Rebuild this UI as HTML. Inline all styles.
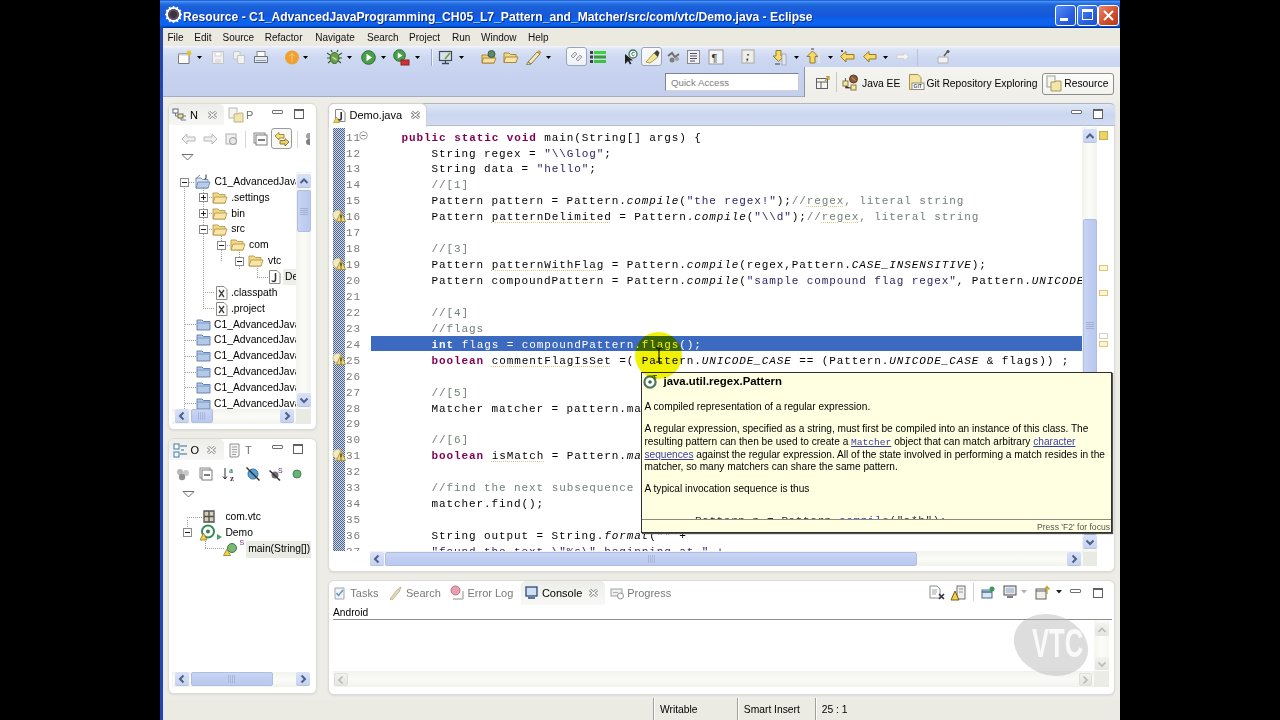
<!DOCTYPE html><html><head><meta charset="utf-8"><style>*{margin:0;padding:0;box-sizing:border-box}
html,body{width:1280px;height:720px;overflow:hidden;background:#000}
body{position:relative;font-family:"Liberation Sans",sans-serif;font-size:10px;color:#000}
.a{position:absolute}
.t{position:absolute;white-space:pre;line-height:1}
.code{position:absolute;font-family:"Liberation Mono",monospace;font-size:11px;letter-spacing:0.9px;white-space:pre;line-height:15.94px;color:#000}
.k{color:#7F0055;font-weight:bold}
.s{color:#2E2468}
.c{color:#748078}
.i{font-style:italic}
.st{font-style:italic}
.sq{text-decoration:underline dotted #D8C880;text-decoration-thickness:1px;text-underline-offset:2px}
</style></head><body><div class="a" style="left:160px;top:0px;width:960px;height:720px;background:#EBEAE3"></div>
<div class="a" style="left:163px;top:96px;width:957px;height:604px;background:#EDECE7"></div>
<div class="a" style="left:160px;top:0px;width:960px;height:28px;background:linear-gradient(#0C50C8 0px,#4A90F8 1.5px,#2A74E4 3px,#1A62D8 6px,#185AD8 13px,#1458DE 16px,#0A64F2 20px,#0E62EE 25px,#0050D0 26.5px,#00309A 27.5px)"></div>
<div class="a" style="left:163px;top:28px;width:957px;height:1px;background:#E6ECF4"></div>
<div class="a" style="left:160px;top:27px;width:3px;height:693px;background:#2446B4"></div>
<div class="a" style="left:163px;top:29px;width:1px;height:691px;background:#E4E8F0"></div>
<svg class="a" style="left:165px;top:6px;" width="17" height="17" viewBox="0 0 17 17"><circle cx="8.5" cy="8.5" r="7.6" fill="#fff"/><circle cx="8.5" cy="8.5" r="5.8" fill="#5A5060"/><circle cx="8.5" cy="8.5" r="3.5" fill="#3C3440"/><rect x="7.7" y="0" width="1.6" height="3" fill="#fff" transform="rotate(0 8.5 8.5)"/><rect x="7.7" y="0" width="1.6" height="3" fill="#fff" transform="rotate(30 8.5 8.5)"/><rect x="7.7" y="0" width="1.6" height="3" fill="#fff" transform="rotate(60 8.5 8.5)"/><rect x="7.7" y="0" width="1.6" height="3" fill="#fff" transform="rotate(90 8.5 8.5)"/><rect x="7.7" y="0" width="1.6" height="3" fill="#fff" transform="rotate(120 8.5 8.5)"/><rect x="7.7" y="0" width="1.6" height="3" fill="#fff" transform="rotate(150 8.5 8.5)"/><rect x="7.7" y="0" width="1.6" height="3" fill="#fff" transform="rotate(180 8.5 8.5)"/><rect x="7.7" y="0" width="1.6" height="3" fill="#fff" transform="rotate(210 8.5 8.5)"/><rect x="7.7" y="0" width="1.6" height="3" fill="#fff" transform="rotate(240 8.5 8.5)"/><rect x="7.7" y="0" width="1.6" height="3" fill="#fff" transform="rotate(270 8.5 8.5)"/><rect x="7.7" y="0" width="1.6" height="3" fill="#fff" transform="rotate(300 8.5 8.5)"/><rect x="7.7" y="0" width="1.6" height="3" fill="#fff" transform="rotate(330 8.5 8.5)"/></svg>
<div class="t" style="left:183px;top:10.56px;font-size:12.15px;color:#fff;font-weight:bold;text-shadow:1px 1px 0 #0A2A80">Resource - C1_AdvancedJavaProgramming_CH05_L7_Pattern_and_Matcher/src/com/vtc/Demo.java - Eclipse</div>
<div class="a" style="left:1055px;top:5px;width:21px;height:21px;border:1px solid #fff;border-radius:3px;background:linear-gradient(135deg,#5A8EF8,#2860E0 60%,#1E50D0)"><div class="a" style="left:4px;top:12px;width:8px;height:3px;background:#fff"></div></div>
<div class="a" style="left:1077px;top:5px;width:21px;height:21px;border:1px solid #fff;border-radius:3px;background:linear-gradient(135deg,#5A8EF8,#2860E0 60%,#1E50D0)"><div class="a" style="left:4px;top:3px;width:11px;height:11px;border:1px solid #fff;border-top-width:3px"></div></div>
<div class="a" style="left:1098px;top:5px;width:21px;height:21px;border:1px solid #fff;border-radius:3px;background:linear-gradient(135deg,#E88870,#D0502C 55%,#B83818)"><svg class="a" style="left:3px;top:3px" width="13" height="13"><path d="M2 2L11 11M11 2L2 11" stroke="#fff" stroke-width="2"/></svg></div>
<div class="a" style="left:163px;top:29px;width:957px;height:17px;background:#EBE9E0"></div>
<div class="t" style="left:167.5px;top:32.91px;font-size:10px;color:#111;">File</div>
<div class="t" style="left:194.3px;top:32.91px;font-size:10px;color:#111;">Edit</div>
<div class="t" style="left:222.5px;top:32.91px;font-size:10px;color:#111;">Source</div>
<div class="t" style="left:264.7px;top:32.91px;font-size:10px;color:#111;">Refactor</div>
<div class="t" style="left:315.3px;top:32.91px;font-size:10px;color:#111;">Navigate</div>
<div class="t" style="left:367px;top:32.91px;font-size:10px;color:#111;">Search</div>
<div class="t" style="left:409px;top:32.91px;font-size:10px;color:#111;">Project</div>
<div class="t" style="left:452px;top:32.91px;font-size:10px;color:#111;">Run</div>
<div class="t" style="left:481px;top:32.91px;font-size:10px;color:#111;">Window</div>
<div class="t" style="left:528px;top:32.91px;font-size:10px;color:#111;">Help</div>
<div class="a" style="left:163px;top:46px;width:957px;height:50px;background:linear-gradient(#F4F7FC 0px,#DCE4F6 3px,#CDD8F1 12px,#C6D2EF 30px,#C3CFEC 49px)"></div>
<div class="a" style="left:163px;top:96px;width:642px;height:1px;background:#A4ACC2"></div>
<div class="a" style="left:163px;top:97px;width:957px;height:5px;background:#EEEDE8"></div>
<div class="a" style="left:805px;top:67px;width:315px;height:35px;background:linear-gradient(#F4F4F0,#EFEEE9)"></div>
<div class="a" style="left:804px;top:67px;width:1px;height:30px;background:#8C96A8"></div>
<div class="a" style="left:168px;top:103px;width:149px;height:327px;background:#fff;border:1px solid #DCDCD6;border-radius:6px;box-shadow:0 1px 2px rgba(0,0,0,0.08)"></div>
<div class="a" style="left:169px;top:104px;width:55px;height:21px;background:linear-gradient(#EDEDEA,#F6F6F4);border-radius:5px 5px 0 0"></div>
<div class="a" style="left:168px;top:438px;width:149px;height:256px;background:#fff;border:1px solid #DCDCD6;border-radius:6px;box-shadow:0 1px 2px rgba(0,0,0,0.08)"></div>
<div class="a" style="left:169px;top:439px;width:55px;height:21px;background:linear-gradient(#EDEDEA,#F6F6F4);border-radius:5px 5px 0 0"></div>
<div class="a" style="left:328px;top:103px;width:787px;height:469px;background:#fff;border:1px solid #DCDCD6;border-radius:6px;box-shadow:0 1px 2px rgba(0,0,0,0.08)"></div>
<div class="a" style="left:329px;top:103px;width:786px;height:23px;background:linear-gradient(#E0E7F6,#CAD7F0 50%,#D2DCF2);border-radius:5px 5px 0 0;border-top:1px solid #B0B6C4;border-bottom:1px solid #B4BCCC"></div>
<div class="a" style="left:328px;top:103px;width:99px;height:24px;background:#fff;border:1px solid #D0D0CC;border-bottom:none;border-radius:6px 6px 0 0"></div>
<div class="a" style="left:328px;top:580px;width:787px;height:115px;background:#fff;border:1px solid #DCDCD6;border-radius:6px;box-shadow:0 1px 2px rgba(0,0,0,0.08)"></div>
<div class="a" style="left:521px;top:581px;width:84px;height:24px;background:linear-gradient(#EDEDEA,#F8F8F6);border-radius:5px 5px 0 0"></div>
<div class="a" style="left:333px;top:128px;width:12px;height:423px;background:repeating-conic-gradient(#4E6488 0 25%,#CCD8EA 0 50%) 0 0/2px 2px"></div>
<div class="a" style="left:346px;top:126px;width:736px;height:425px;overflow:hidden">
<div class="a" style="left:25px;top:210px;width:711px;height:15px;background:#3D6AC1"></div>
<div class="code" style="left:25.600000000000023px;top:4.599999999999994px">    <span class="k">public</span> <span class="k">static</span> <span class="k">void</span> main(String[] args) {
        String regex = <span class="s">&quot;\\Glog&quot;</span>;
        String data = <span class="s">&quot;hello&quot;</span>;
        <span class="c">//[1]</span>
        Pattern pattern = Pattern.<span class="i">compile</span>(<span class="s">&quot;the regex!&quot;</span>);<span class="c">//<span class="sq">regex</span>, literal string</span>
        Pattern <span class="sq">patternDelimited</span> = Pattern.<span class="i">compile</span>(<span class="s">&quot;\\d&quot;</span>);<span class="c">//<span class="sq">regex</span>, literal string</span>

        <span class="c">//[3]</span>
        Pattern <span class="sq">patternWithFlag</span> = Pattern.<span class="i">compile</span>(regex,Pattern.<span class="st">CASE_INSENSITIVE</span>);
        Pattern compoundPattern = Pattern.<span class="i">compile</span>(<span class="s">&quot;sample compound flag regex&quot;</span>, Pattern.<span class="st">UNICODE_CASE</span>);

        <span class="c">//[4]</span>
        <span class="c">//flags</span>
        <span style="color:#fff"><b>int</b> flags = compoundPattern.flags();</span>
        <span class="k">boolean</span> <span class="sq">commentFlagIsSet</span> =( Pattern.<span class="st">UNICODE_CASE</span> == (Pattern.<span class="st">UNICODE_CASE</span> &amp; flags)) ;

        <span class="c">//[5]</span>
        Matcher matcher = pattern.matcher(data);

        <span class="c">//[6]</span>
        <span class="k">boolean</span> <span class="sq">isMatch</span> = Pattern.<span class="i">matches</span>(regex, data);

        <span class="c">//find the next subsequence of the input sequence</span>
        matcher.find();

        String output = String.<span class="i">format</span>(<span class="s">&quot;&quot;</span> +
        <span class="s">&quot;found the text \&quot;%s\&quot; beginning at &quot;</span> +</div>
<div class="code" style="left:0px;top:4.599999999999994px;color:#787878">11
12
13
14
15
16
17
18
19
20
21
22
23
24
25
26
27
28
29
30
31
32
33
34
35
36
37</div>
</div>
<svg class="a" style="left:359px;top:131px;" width="9" height="9" viewBox="0 0 9 9"><circle cx="4.5" cy="4.5" r="3.8" fill="#fff" stroke="#A0A0A0" stroke-width="1"/><path d="M2.5 4.5H6.5" stroke="#808080" stroke-width="1"/></svg>
<svg class="a" style="left:332px;top:209.7px;" width="14" height="12" viewBox="0 0 14 12"><circle cx="5.5" cy="5" r="4.6" fill="#F2EAC0" stroke="#C8BC98" stroke-width="0.9"/><path d="M3 9.5H8V11.5H3Z" fill="#D0C8B0"/><path d="M9 1.5L13.5 11.5H4.5Z" fill="#F0D878" stroke="#A08838" stroke-width="0.8"/><path d="M9 4.5V8.5M9 9.5V10.5" stroke="#202010" stroke-width="1.2"/></svg>
<svg class="a" style="left:332px;top:257.52px;" width="14" height="12" viewBox="0 0 14 12"><circle cx="5.5" cy="5" r="4.6" fill="#F2EAC0" stroke="#C8BC98" stroke-width="0.9"/><path d="M3 9.5H8V11.5H3Z" fill="#D0C8B0"/><path d="M9 1.5L13.5 11.5H4.5Z" fill="#F0D878" stroke="#A08838" stroke-width="0.8"/><path d="M9 4.5V8.5M9 9.5V10.5" stroke="#202010" stroke-width="1.2"/></svg>
<svg class="a" style="left:332px;top:353.15999999999997px;" width="14" height="12" viewBox="0 0 14 12"><circle cx="5.5" cy="5" r="4.6" fill="#F2EAC0" stroke="#C8BC98" stroke-width="0.9"/><path d="M3 9.5H8V11.5H3Z" fill="#D0C8B0"/><path d="M9 1.5L13.5 11.5H4.5Z" fill="#F0D878" stroke="#A08838" stroke-width="0.8"/><path d="M9 4.5V8.5M9 9.5V10.5" stroke="#202010" stroke-width="1.2"/></svg>
<svg class="a" style="left:332px;top:448.8px;" width="14" height="12" viewBox="0 0 14 12"><circle cx="5.5" cy="5" r="4.6" fill="#F2EAC0" stroke="#C8BC98" stroke-width="0.9"/><path d="M3 9.5H8V11.5H3Z" fill="#D0C8B0"/><path d="M9 1.5L13.5 11.5H4.5Z" fill="#F0D878" stroke="#A08838" stroke-width="0.8"/><path d="M9 4.5V8.5M9 9.5V10.5" stroke="#202010" stroke-width="1.2"/></svg>
<svg class="a" style="left:333px;top:108px;" width="14" height="15" viewBox="0 0 14 15"><path d="M2.5 1.5H9L12 4.5V13.5H2.5Z" fill="#fff" stroke="#8A8A80" stroke-width="1"/><path d="M8.2 4V10.3Q8.2 12 6.5 12Q5.2 12 4.8 11" fill="none" stroke="#303030" stroke-width="1.6"/><path d="M3.5 9L0.5 14.5H6.5Z" fill="#F0D060" stroke="#B09030" stroke-width="0.7"/></svg>
<div class="t" style="left:349.5px;top:109.63px;font-size:11px;color:#000;">Demo.java</div>
<svg class="a" style="left:410px;top:110px;" width="11" height="10" viewBox="0 0 11 10"><path d="M1.8 1.8L9.2 8.2M9.2 1.8L1.8 8.2" stroke="#6E6E6E" stroke-width="3"/><path d="M1.8 1.8L9.2 8.2M9.2 1.8L1.8 8.2" stroke="#fff" stroke-width="1.2"/></svg>
<div class="a" style="left:1071px;top:110px;width:11px;height:4px;border:1px solid #707070;background:#fff;border-radius:1px"></div>
<div class="a" style="left:1093px;top:109px;width:10px;height:10px;border:1px solid #606060;border-top-width:2px;background:#fff"></div>
<div class="a" style="left:1082px;top:127px;width:15px;height:424px;background:linear-gradient(90deg,#F3F3EE,#FBFBF8 50%,#F3F3EE)"></div>
<div class="a" style="left:1083px;top:129px;width:14px;height:14px;background:linear-gradient(#D9E2F8,#C6D3F2);border-radius:2px;border-bottom:1px solid #B8C4DC"></div>
<svg class="a" style="left:1085px;top:131px;" width="10" height="10" viewBox="0 0 10 10"><path d="M1.5 7L5 3.5L8.5 7" fill="none" stroke="#4D6185" stroke-width="2"/></svg>
<div class="a" style="left:1083px;top:219px;width:14px;height:316px;background:linear-gradient(90deg,#C9D5F4,#BFCDF1 50%,#B9C8EE);border-radius:2px;border:1px solid #B0BEE0"></div>
<div class="a" style="left:1083px;top:535px;width:14px;height:14px;background:linear-gradient(#D9E2F8,#C6D3F2);border-radius:2px;border-bottom:1px solid #B8C4DC"></div>
<svg class="a" style="left:1085px;top:537px;" width="10" height="10" viewBox="0 0 10 10"><path d="M1.5 3.5L5 7L8.5 3.5" fill="none" stroke="#4D6185" stroke-width="2"/></svg>
<div class="a" style="left:1099px;top:131px;width:9px;height:9px;background:#E8D468;border:1px solid #C8B040"></div>
<div class="a" style="left:1099px;top:265px;width:9px;height:6px;background:#FAF4D8;border:1px solid #E0C870"></div>
<div class="a" style="left:1099px;top:290px;width:9px;height:6px;background:#FAF4D8;border:1px solid #E0C870"></div>
<div class="a" style="left:1099px;top:333px;width:9px;height:6px;background:#fff;border:1px solid #D0D0C8"></div>
<div class="a" style="left:1099px;top:341px;width:9px;height:6px;background:#FAF4D8;border:1px solid #E0C870"></div>
<div class="a" style="left:370px;top:551px;width:727px;height:15px;background:linear-gradient(#F3F3EE,#FBFBF8 50%,#F3F3EE)"></div>
<div class="a" style="left:370px;top:552px;width:14px;height:14px;background:linear-gradient(#D9E2F8,#C6D3F2);border-radius:2px;border-bottom:1px solid #B8C4DC"></div>
<svg class="a" style="left:372px;top:554px;" width="10" height="10" viewBox="0 0 10 10"><path d="M6.5 1.5L3 5L6.5 8.5" fill="none" stroke="#4D6185" stroke-width="2"/></svg>
<div class="a" style="left:385px;top:552px;width:532px;height:14px;background:linear-gradient(#CBD6F5,#BFCDF1 50%,#BAC9EE);border-radius:2px;border:1px solid #B0BEE0"></div>
<div class="a" style="left:1067px;top:552px;width:14px;height:14px;background:linear-gradient(#D9E2F8,#C6D3F2);border-radius:2px;border-bottom:1px solid #B8C4DC"></div>
<svg class="a" style="left:1069px;top:554px;" width="10" height="10" viewBox="0 0 10 10"><path d="M3.5 1.5L7 5L3.5 8.5" fill="none" stroke="#4D6185" stroke-width="2"/></svg>
<div class="a" style="left:1083px;top:552px;width:14px;height:14px;background:#EAEAE4"></div>
<svg class="a" style="left:1086px;top:322px;" width="8" height="7" viewBox="0 0 8 7"><path d="M0 0.5H8M0 2.5H8M0 4.5H8M0 6.5H8" stroke="#9CA8CC" stroke-width="0.8"/></svg>
<svg class="a" style="left:648px;top:555px;" width="8" height="8" viewBox="0 0 8 8"><path d="M0.5 0V8M2.5 0V8M4.5 0V8M6.5 0V8" stroke="#A4B0D0" stroke-width="0.8"/></svg>
<div class="a" style="left:641px;top:372px;width:471px;height:161px;background:#FFFFE1;border:1px solid #303030;box-shadow:1px 1px 1px #505050"></div>
<svg class="a" style="left:643px;top:374px;" width="16" height="15" viewBox="0 0 16 15"><circle cx="7" cy="8" r="5.6" fill="#fff" stroke="#4A7A5A" stroke-width="2.2"/><circle cx="7" cy="8" r="1.8" fill="#3A6A4A"/><path d="M9.5 1.5H14M11.5 1.5V6.5M11.5 4H13.5" stroke="#4A6A5A" stroke-width="1.2" fill="none"/></svg>
<div class="t" style="left:663.5px;top:376.43px;font-size:11.4px;color:#000;font-weight:bold">java.util.regex.Pattern</div>
<div class="t" style="left:644.5px;top:401.84px;font-size:10.15px;color:#000;">A compiled representation of a regular expression.</div>
<div class="t" style="left:644.5px;top:424.04px;font-size:10.15px;color:#000;">A regular expression, specified as a string, must first be compiled into an instance of this class. The</div>
<div class="t" style="left:644.5px;top:436.64px;font-size:10.15px">resulting pattern can then be used to create a <span style="font-family:'Liberation Mono',monospace;font-size:9.6px;color:#3A3AB0;text-decoration:underline">Matcher</span> object that can match arbitrary <span style="color:#3A3AB0;text-decoration:underline">character</span></div>
<div class="t" style="left:644.5px;top:449.64px;font-size:10.15px"><span style="color:#3A3AB0;text-decoration:underline">sequences</span> against the regular expression. All of the state involved in performing a match resides in the</div>
<div class="t" style="left:644.5px;top:462.34px;font-size:10.15px;color:#000;">matcher, so many matchers can share the same pattern.</div>
<div class="t" style="left:644.5px;top:484.14px;font-size:10.15px;color:#000;">A typical invocation sequence is thus</div>
<div class="a" style="left:642px;top:512px;width:469px;height:7px;overflow:hidden"><div class="code" style="left:53px;top:1.5px;font-size:11px;letter-spacing:0.6px;color:#303030">Pattern p = Pattern.<span style="color:#3A3AB0;text-decoration:underline">compile</span>("a*b");</div></div>
<div class="a" style="left:642px;top:518.5px;width:469px;height:1px;background:#8A8A80"></div>
<div class="t" style="left:1037px;top:523.30px;font-size:8.6px;color:#555;">Press &#x27;F2&#x27; for focus</div>
<div class="a" style="left:635px;top:332px;width:47px;height:47px;border-radius:50%;background:radial-gradient(circle,#F0F000 0,#F2F010 93%,rgba(242,240,40,0) 100%);mix-blend-mode:multiply"></div>
<svg class="a" style="left:655px;top:347px;" width="8" height="16" viewBox="0 0 8 16"><path d="M1 1H7M4 1V15M1 15H7" stroke="#000" stroke-width="1"/></svg>
<svg class="a" style="left:172px;top:108px;" width="15" height="14" viewBox="0 0 15 14"><rect x="1" y="1" width="5" height="4" fill="#fff" stroke="#5A6A7A"/><rect x="6" y="6" width="5" height="4" fill="#F0E0A0" stroke="#6A6A50"/><path d="M3.5 5V8H6M11 8H14M9 10V12H14" stroke="#6A7A8A" fill="none"/></svg>
<div class="t" style="left:190px;top:110.13px;font-size:11px;color:#000;">N</div>
<svg class="a" style="left:207px;top:110px;" width="11" height="10" viewBox="0 0 11 10"><path d="M1.8 1.8L9.2 8.2M9.2 1.8L1.8 8.2" stroke="#8A8A8A" stroke-width="3"/><path d="M1.8 1.8L9.2 8.2M9.2 1.8L1.8 8.2" stroke="#fff" stroke-width="1.2"/></svg>
<svg class="a" style="left:228px;top:107px;" width="17" height="16" viewBox="0 0 17 16"><rect x="1" y="1" width="8" height="10" fill="#F4F4F0" stroke="#B8B8B0"/><path d="M6 7H10L11 6H15V15H6Z" fill="#F2E6B0" stroke="#C0B080"/></svg>
<div class="t" style="left:246px;top:110.13px;font-size:11px;color:#707070;">P</div>
<div class="a" style="left:272px;top:110px;width:11px;height:4px;border:1px solid #707070;background:#fff;border-radius:1px"></div>
<div class="a" style="left:294px;top:109px;width:10px;height:10px;border:1px solid #606060;border-top-width:2px;background:#fff"></div>
<svg class="a" style="left:181px;top:132px;" width="15" height="14" viewBox="0 0 15 14"><path d="M1 7L6 2V5H14V9H6V12Z" fill="#F0F0F0" stroke="#B8B8B8"/></svg>
<svg class="a" style="left:203px;top:132px;" width="15" height="14" viewBox="0 0 15 14"><path d="M14 7L9 2V5H1V9H9V12Z" fill="#F0F0F0" stroke="#B8B8B8"/></svg>
<svg class="a" style="left:225px;top:132px;" width="14" height="14" viewBox="0 0 14 14"><rect x="1" y="2" width="10" height="10" fill="#F0F0F0" stroke="#B0B0B0"/><circle cx="8" cy="9" r="3.5" fill="#E8E8E8" stroke="#999"/></svg>
<div class="a" style="left:245px;top:131px;width:1px;height:17px;background:#D8D8D0"></div>
<svg class="a" style="left:253px;top:132px;" width="15" height="14" viewBox="0 0 15 14"><rect x="1" y="1" width="11" height="10" fill="#F4F4F4" stroke="#8A8A8A"/><rect x="3" y="3" width="11" height="10" fill="#fff" stroke="#7A7A7A"/><path d="M5 8H12" stroke="#505050" stroke-width="1.5"/></svg>
<div class="a" style="left:271px;top:128px;width:21px;height:21px;border:1px solid #9A9A9A;border-radius:3px;background:#F8F8F6"></div>
<svg class="a" style="left:274px;top:131px;" width="16" height="16" viewBox="0 0 16 16"><path d="M1 5L5 1.5V3.5H10V7H5V9Z" fill="#F6E27A" stroke="#9A8030" stroke-width="0.9"/><path d="M15 11L11 7.5V9.5H6V13H11V15Z" fill="#E6D070" stroke="#8A7028" stroke-width="0.9"/></svg>
<div class="a" style="left:297px;top:131px;width:1px;height:17px;background:#D8D8D0"></div>
<svg class="a" style="left:302px;top:132px;" width="8" height="14" viewBox="0 0 8 14"><circle cx="7" cy="4" r="3" fill="#A0A0A0"/><circle cx="7" cy="10" r="3" fill="#808080"/></svg>
<svg class="a" style="left:181px;top:153px;" width="13" height="8" viewBox="0 0 13 8"><path d="M1 1.5H12L6.5 7Z" fill="#fff" stroke="#707070"/></svg>
<div class="a" style="left:169px;top:172px;width:127px;height:237px;overflow:hidden">
<div class="a" style="left:-169px;top:-172px;width:400px;height:600px">
<div class="a" style="left:184px;top:186px;width:1px;height:234px;background-image:repeating-linear-gradient(#A0A0A0 0 1px,transparent 1px 2px)"></div>
<div class="a" style="left:203px;top:186px;width:1px;height:123px;background-image:repeating-linear-gradient(#A0A0A0 0 1px,transparent 1px 2px)"></div>
<div class="a" style="left:221px;top:234px;width:1px;height:27px;background-image:repeating-linear-gradient(#A0A0A0 0 1px,transparent 1px 2px)"></div>
<div class="a" style="left:239px;top:250px;width:1px;height:20px;background-image:repeating-linear-gradient(#A0A0A0 0 1px,transparent 1px 2px)"></div>
<div class="a" style="left:189px;top:182px;width:6px;height:1px;background-image:repeating-linear-gradient(90deg,#A0A0A0 0 1px,transparent 1px 2px)"></div>
<svg class="a" style="left:179.5px;top:177.5px;" width="9" height="9" viewBox="0 0 9 9"><rect x="0.5" y="0.5" width="8" height="8" fill="#fff" stroke="#8C8C8C"/><path d="M2 4.5H7" stroke="#202020"/></svg>
<svg class="a" style="left:195px;top:174.0px;" width="16" height="15" viewBox="0 0 16 15"><path d="M1 4H6L7.5 5.5H13V14H1Z" fill="#D8E4F4" stroke="#6A8AB0" stroke-width="0.9"/><path d="M3 8H15L13 14H1Z" fill="#B8CCE8" stroke="#6A8AB0" stroke-width="0.9"/><path d="M11 0.5V4Q11 5.5 9.5 5" stroke="#333" fill="none" stroke-width="1"/><path d="M0.5 5L5 1" stroke="#888"/></svg>
<div class="t" style="left:214.4px;top:176.97px;font-size:10.3px;color:#000;">C1_AdvancedJava</div>
<div class="a" style="left:207px;top:197px;width:5px;height:1px;background-image:repeating-linear-gradient(90deg,#A0A0A0 0 1px,transparent 1px 2px)"></div>
<svg class="a" style="left:198.5px;top:193.34px;" width="9" height="9" viewBox="0 0 9 9"><rect x="0.5" y="0.5" width="8" height="8" fill="#fff" stroke="#8C8C8C"/><path d="M2 4.5H7" stroke="#202020"/><path d="M4.5 2V7" stroke="#202020"/></svg>
<svg class="a" style="left:212px;top:190.84px;" width="16" height="13" viewBox="0 0 16 13"><path d="M1 2H6L7.5 3.5H13V12H1Z" fill="#F2D888" stroke="#B89848" stroke-width="0.9"/><path d="M3 6H15L13 12H1Z" fill="#F8E6A8" stroke="#B89848" stroke-width="0.9"/></svg>
<div class="t" style="left:231.2px;top:192.81px;font-size:10.3px;color:#000;">.settings</div>
<div class="a" style="left:207px;top:213px;width:5px;height:1px;background-image:repeating-linear-gradient(90deg,#A0A0A0 0 1px,transparent 1px 2px)"></div>
<svg class="a" style="left:198.5px;top:209.18px;" width="9" height="9" viewBox="0 0 9 9"><rect x="0.5" y="0.5" width="8" height="8" fill="#fff" stroke="#8C8C8C"/><path d="M2 4.5H7" stroke="#202020"/><path d="M4.5 2V7" stroke="#202020"/></svg>
<svg class="a" style="left:212px;top:206.68px;" width="16" height="13" viewBox="0 0 16 13"><path d="M1 2H6L7.5 3.5H13V12H1Z" fill="#F2D888" stroke="#B89848" stroke-width="0.9"/><path d="M3 6H15L13 12H1Z" fill="#F8E6A8" stroke="#B89848" stroke-width="0.9"/></svg>
<div class="t" style="left:231.2px;top:208.65px;font-size:10.3px;color:#000;">bin</div>
<div class="a" style="left:207px;top:229px;width:5px;height:1px;background-image:repeating-linear-gradient(90deg,#A0A0A0 0 1px,transparent 1px 2px)"></div>
<svg class="a" style="left:198.5px;top:225.01999999999998px;" width="9" height="9" viewBox="0 0 9 9"><rect x="0.5" y="0.5" width="8" height="8" fill="#fff" stroke="#8C8C8C"/><path d="M2 4.5H7" stroke="#202020"/></svg>
<svg class="a" style="left:212px;top:222.51999999999998px;" width="16" height="13" viewBox="0 0 16 13"><path d="M1 2H6L7.5 3.5H13V12H1Z" fill="#F2D888" stroke="#B89848" stroke-width="0.9"/><path d="M3 6H15L13 12H1Z" fill="#F8E6A8" stroke="#B89848" stroke-width="0.9"/></svg>
<div class="t" style="left:231.2px;top:224.49px;font-size:10.3px;color:#000;">src</div>
<div class="a" style="left:225px;top:245px;width:5px;height:1px;background-image:repeating-linear-gradient(90deg,#A0A0A0 0 1px,transparent 1px 2px)"></div>
<svg class="a" style="left:216.5px;top:240.86px;" width="9" height="9" viewBox="0 0 9 9"><rect x="0.5" y="0.5" width="8" height="8" fill="#fff" stroke="#8C8C8C"/><path d="M2 4.5H7" stroke="#202020"/></svg>
<svg class="a" style="left:230px;top:238.36px;" width="16" height="13" viewBox="0 0 16 13"><path d="M1 2H6L7.5 3.5H13V12H1Z" fill="#F2D888" stroke="#B89848" stroke-width="0.9"/><path d="M3 6H15L13 12H1Z" fill="#F8E6A8" stroke="#B89848" stroke-width="0.9"/></svg>
<div class="t" style="left:249px;top:240.33px;font-size:10.3px;color:#000;">com</div>
<svg class="a" style="left:234.5px;top:256.7px;" width="9" height="9" viewBox="0 0 9 9"><rect x="0.5" y="0.5" width="8" height="8" fill="#fff" stroke="#8C8C8C"/><path d="M2 4.5H7" stroke="#202020"/></svg>
<svg class="a" style="left:248px;top:254.2px;" width="16" height="13" viewBox="0 0 16 13"><path d="M1 2H6L7.5 3.5H13V12H1Z" fill="#F2D888" stroke="#B89848" stroke-width="0.9"/><path d="M3 6H15L13 12H1Z" fill="#F8E6A8" stroke="#B89848" stroke-width="0.9"/></svg>
<div class="t" style="left:268px;top:256.17px;font-size:10.3px;color:#000;">vtc</div>
<div class="a" style="left:257px;top:277px;width:11px;height:1px;background-image:repeating-linear-gradient(90deg,#A0A0A0 0 1px,transparent 1px 2px)"></div>
<div class="a" style="left:257px;top:266px;width:1px;height:11px;background-image:repeating-linear-gradient(#A0A0A0 0 1px,transparent 1px 2px)"></div>
<svg class="a" style="left:268px;top:270.03999999999996px;" width="13" height="14" viewBox="0 0 13 14"><path d="M1.5 0.5H9L12 3.5V13.5H1.5Z" fill="#fff" stroke="#8A8A80"/><path d="M7.5 3V9.5Q7.5 11.5 5.5 11.5Q4.3 11.5 3.8 10.5" fill="none" stroke="#303030" stroke-width="1.5"/></svg>
<div class="a" style="left:283px;top:269.03999999999996px;width:30px;height:16px;background:#EEEEE8"></div>
<div class="t" style="left:285px;top:272.01px;font-size:10.3px;color:#000;">Demo.java</div>
<div class="a" style="left:203px;top:292px;width:12px;height:1px;background-image:repeating-linear-gradient(90deg,#A0A0A0 0 1px,transparent 1px 2px)"></div>
<svg class="a" style="left:215px;top:285.88px;" width="13" height="14" viewBox="0 0 13 14"><path d="M1.5 0.5H9L12 3.5V13.5H1.5Z" fill="#fff" stroke="#8A8A80"/><path d="M4 4L9 11M9 4L4 11" stroke="#404040" stroke-width="1.3"/></svg>
<div class="t" style="left:231px;top:287.85px;font-size:10.3px;color:#000;">.classpath</div>
<div class="a" style="left:203px;top:308px;width:12px;height:1px;background-image:repeating-linear-gradient(90deg,#A0A0A0 0 1px,transparent 1px 2px)"></div>
<svg class="a" style="left:215px;top:301.72px;" width="13" height="14" viewBox="0 0 13 14"><path d="M1.5 0.5H9L12 3.5V13.5H1.5Z" fill="#fff" stroke="#8A8A80"/><path d="M4 4L9 11M9 4L4 11" stroke="#404040" stroke-width="1.3"/></svg>
<div class="t" style="left:231px;top:303.69px;font-size:10.3px;color:#000;">.project</div>
<div class="a" style="left:185px;top:324px;width:11px;height:1px;background-image:repeating-linear-gradient(90deg,#A0A0A0 0 1px,transparent 1px 2px)"></div>
<svg class="a" style="left:196px;top:317.56px;" width="15" height="13" viewBox="0 0 15 13"><path d="M1 2H6L7.5 3.5H14V12H1Z" fill="#B4C8E8" stroke="#5A7AA8" stroke-width="0.9"/><path d="M1 5H14" stroke="#7A9AC8"/></svg>
<div class="t" style="left:214px;top:319.53px;font-size:10.3px;color:#000;">C1_AdvancedJava</div>
<div class="a" style="left:185px;top:340px;width:11px;height:1px;background-image:repeating-linear-gradient(90deg,#A0A0A0 0 1px,transparent 1px 2px)"></div>
<svg class="a" style="left:196px;top:333.4px;" width="15" height="13" viewBox="0 0 15 13"><path d="M1 2H6L7.5 3.5H14V12H1Z" fill="#B4C8E8" stroke="#5A7AA8" stroke-width="0.9"/><path d="M1 5H14" stroke="#7A9AC8"/></svg>
<div class="t" style="left:214px;top:335.37px;font-size:10.3px;color:#000;">C1_AdvancedJava</div>
<div class="a" style="left:185px;top:356px;width:11px;height:1px;background-image:repeating-linear-gradient(90deg,#A0A0A0 0 1px,transparent 1px 2px)"></div>
<svg class="a" style="left:196px;top:349.24px;" width="15" height="13" viewBox="0 0 15 13"><path d="M1 2H6L7.5 3.5H14V12H1Z" fill="#B4C8E8" stroke="#5A7AA8" stroke-width="0.9"/><path d="M1 5H14" stroke="#7A9AC8"/></svg>
<div class="t" style="left:214px;top:351.21px;font-size:10.3px;color:#000;">C1_AdvancedJava</div>
<div class="a" style="left:185px;top:372px;width:11px;height:1px;background-image:repeating-linear-gradient(90deg,#A0A0A0 0 1px,transparent 1px 2px)"></div>
<svg class="a" style="left:196px;top:365.08px;" width="15" height="13" viewBox="0 0 15 13"><path d="M1 2H6L7.5 3.5H14V12H1Z" fill="#B4C8E8" stroke="#5A7AA8" stroke-width="0.9"/><path d="M1 5H14" stroke="#7A9AC8"/></svg>
<div class="t" style="left:214px;top:367.05px;font-size:10.3px;color:#000;">C1_AdvancedJava</div>
<div class="a" style="left:185px;top:387px;width:11px;height:1px;background-image:repeating-linear-gradient(90deg,#A0A0A0 0 1px,transparent 1px 2px)"></div>
<svg class="a" style="left:196px;top:380.91999999999996px;" width="15" height="13" viewBox="0 0 15 13"><path d="M1 2H6L7.5 3.5H14V12H1Z" fill="#B4C8E8" stroke="#5A7AA8" stroke-width="0.9"/><path d="M1 5H14" stroke="#7A9AC8"/></svg>
<div class="t" style="left:214px;top:382.89px;font-size:10.3px;color:#000;">C1_AdvancedJava</div>
<div class="a" style="left:185px;top:403px;width:11px;height:1px;background-image:repeating-linear-gradient(90deg,#A0A0A0 0 1px,transparent 1px 2px)"></div>
<svg class="a" style="left:196px;top:396.76px;" width="15" height="13" viewBox="0 0 15 13"><path d="M1 2H6L7.5 3.5H14V12H1Z" fill="#B4C8E8" stroke="#5A7AA8" stroke-width="0.9"/><path d="M1 5H14" stroke="#7A9AC8"/></svg>
<div class="t" style="left:214px;top:398.73px;font-size:10.3px;color:#000;">C1_AdvancedJava</div>
</div></div>
<div class="a" style="left:296px;top:172px;width:15px;height:237px;background:linear-gradient(90deg,#F3F3EE,#FBFBF8 50%,#F3F3EE)"></div>
<div class="a" style="left:297px;top:174px;width:14px;height:14px;background:linear-gradient(#D9E2F8,#C6D3F2);border-radius:2px;border-bottom:1px solid #B8C4DC"></div>
<svg class="a" style="left:299px;top:176px;" width="10" height="10" viewBox="0 0 10 10"><path d="M1.5 7L5 3.5L8.5 7" fill="none" stroke="#4D6185" stroke-width="2"/></svg>
<div class="a" style="left:297px;top:190px;width:14px;height:42px;background:linear-gradient(90deg,#C9D5F4,#BFCDF1 50%,#B9C8EE);border-radius:2px;border:1px solid #B0BEE0"></div>
<div class="a" style="left:297px;top:393px;width:14px;height:14px;background:linear-gradient(#D9E2F8,#C6D3F2);border-radius:2px;border-bottom:1px solid #B8C4DC"></div>
<svg class="a" style="left:299px;top:395px;" width="10" height="10" viewBox="0 0 10 10"><path d="M1.5 3.5L5 7L8.5 3.5" fill="none" stroke="#4D6185" stroke-width="2"/></svg>
<div class="a" style="left:172px;top:409px;width:125px;height:15px;background:linear-gradient(#F3F3EE,#FBFBF8 50%,#F3F3EE)"></div>
<div class="a" style="left:175px;top:409px;width:14px;height:14px;background:linear-gradient(#D9E2F8,#C6D3F2);border-radius:2px;border-bottom:1px solid #B8C4DC"></div>
<svg class="a" style="left:177px;top:411px;" width="10" height="10" viewBox="0 0 10 10"><path d="M6.5 1.5L3 5L6.5 8.5" fill="none" stroke="#4D6185" stroke-width="2"/></svg>
<div class="a" style="left:191px;top:409px;width:22px;height:14px;background:linear-gradient(#CBD6F5,#BFCDF1 50%,#BAC9EE);border-radius:2px;border:1px solid #B0BEE0"></div>
<div class="a" style="left:280px;top:409px;width:14px;height:14px;background:linear-gradient(#D9E2F8,#C6D3F2);border-radius:2px;border-bottom:1px solid #B8C4DC"></div>
<svg class="a" style="left:282px;top:411px;" width="10" height="10" viewBox="0 0 10 10"><path d="M3.5 1.5L7 5L3.5 8.5" fill="none" stroke="#4D6185" stroke-width="2"/></svg>
<div class="a" style="left:296px;top:409px;width:15px;height:15px;background:#EAEAE4"></div>
<svg class="a" style="left:300px;top:208px;" width="8" height="7" viewBox="0 0 8 7"><path d="M0 0.5H8M0 2.5H8M0 4.5H8M0 6.5H8" stroke="#9CA8CC" stroke-width="0.8"/></svg>
<svg class="a" style="left:198px;top:412px;" width="8" height="8" viewBox="0 0 8 8"><path d="M0.5 0V8M2.5 0V8M4.5 0V8M6.5 0V8" stroke="#A4B0D0" stroke-width="0.8"/></svg>
<svg class="a" style="left:173px;top:443px;" width="15" height="15" viewBox="0 0 15 15"><rect x="1" y="1" width="5" height="5" fill="#fff" stroke="#3A7AB0"/><rect x="1" y="9" width="5" height="5" fill="#fff" stroke="#3A7AB0"/><path d="M7 3H14M8 7H11M7 11H14" stroke="#3A6A9A" stroke-width="1.2"/></svg>
<div class="t" style="left:190.5px;top:445.13px;font-size:11px;color:#000;">O</div>
<svg class="a" style="left:206px;top:445px;" width="11" height="10" viewBox="0 0 11 10"><path d="M1.8 1.8L9.2 8.2M9.2 1.8L1.8 8.2" stroke="#8A8A8A" stroke-width="3"/><path d="M1.8 1.8L9.2 8.2M9.2 1.8L1.8 8.2" stroke="#fff" stroke-width="1.2"/></svg>
<svg class="a" style="left:229px;top:443px;" width="12" height="15" viewBox="0 0 12 15"><path d="M1 1H10V13L8 14H1Z" fill="#F4F4F2" stroke="#909090"/><path d="M3 4H8M3 6.5H8M3 9H8M3 11.5H7" stroke="#A0A0A0"/></svg>
<div class="t" style="left:245px;top:445.13px;font-size:11px;color:#707070;">T</div>
<div class="a" style="left:272px;top:445px;width:11px;height:4px;border:1px solid #707070;background:#fff;border-radius:1px"></div>
<div class="a" style="left:293px;top:444px;width:10px;height:10px;border:1px solid #606060;border-top-width:2px;background:#fff"></div>
<svg class="a" style="left:176px;top:467px;" width="14" height="14" viewBox="0 0 14 14"><circle cx="4" cy="5" r="3" fill="#B8B8B8"/><circle cx="10" cy="6" r="3" fill="#C8C8C8"/><circle cx="6" cy="10" r="3.2" fill="#909090"/></svg>
<svg class="a" style="left:199px;top:467px;" width="14" height="14" viewBox="0 0 14 14"><rect x="1" y="1" width="10" height="10" fill="#F4F4F4" stroke="#8A8A8A"/><rect x="3" y="3" width="10" height="10" fill="#fff" stroke="#7A7A7A"/><path d="M5 8H11" stroke="#505050" stroke-width="1.5"/></svg>
<svg class="a" style="left:222px;top:466px;" width="16" height="16" viewBox="0 0 16 16"><path d="M3 2V13M1 10.5L3 13L5 10.5" stroke="#303030" fill="none"/><text x="7" y="7" font-size="8" font-weight="bold" fill="#2A8A6A" font-family="Liberation Serif">a</text><text x="8" y="15" font-size="9" font-weight="bold" fill="#6A2A5A" font-family="Liberation Serif">z</text></svg>
<svg class="a" style="left:245px;top:466px;" width="16" height="16" viewBox="0 0 16 16"><circle cx="8" cy="8" r="5" fill="#5AA0D8" stroke="#3A70A0"/><path d="M1.5 1.5L14.5 14.5" stroke="#303030" stroke-width="1.4"/></svg>
<svg class="a" style="left:268px;top:466px;" width="16" height="16" viewBox="0 0 16 16"><circle cx="7" cy="9" r="3.5" fill="#707070"/><path d="M1.5 4.5L12 14.5" stroke="#303030" stroke-width="1.4"/><text x="10" y="6.5" font-size="7" fill="#6A2A6A" font-family="Liberation Sans">S</text></svg>
<svg class="a" style="left:291px;top:468px;" width="12" height="12" viewBox="0 0 12 12"><circle cx="6" cy="6" r="4" fill="#6AB07A" stroke="#3A8A4A"/></svg>
<svg class="a" style="left:182px;top:490px;" width="13" height="8" viewBox="0 0 13 8"><path d="M1 1.5H12L6.5 7Z" fill="#fff" stroke="#707070"/></svg>
<div class="a" style="left:187px;top:520px;width:1px;height:13px;background-image:repeating-linear-gradient(#A0A0A0 0 1px,transparent 1px 2px)"></div>
<div class="a" style="left:187px;top:517px;width:16px;height:1px;background-image:repeating-linear-gradient(90deg,#A0A0A0 0 1px,transparent 1px 2px)"></div>
<svg class="a" style="left:182.5px;top:528.0px;" width="9" height="9" viewBox="0 0 9 9"><rect x="0.5" y="0.5" width="8" height="8" fill="#fff" stroke="#8C8C8C"/><path d="M2 4.5H7" stroke="#202020"/></svg>
<svg class="a" style="left:203px;top:510px;" width="12" height="13" viewBox="0 0 12 13"><path d="M1 1H11V12H1Z M6 1V12 M1 6.5H11" stroke="#505050" stroke-width="1.3" fill="#D8D0B8"/></svg>
<div class="t" style="left:225.4px;top:511.67px;font-size:10.3px;color:#000;">com.vtc</div>
<svg class="a" style="left:199px;top:524px;" width="24" height="17" viewBox="0 0 24 17"><circle cx="9" cy="7.5" r="6" fill="#fff" stroke="#3A8A5A" stroke-width="2"/><circle cx="9" cy="7.5" r="2" fill="#3A7A4A"/><path d="M4.5 9L1 16H8Z" fill="#F0D050" stroke="#9A7A20" stroke-width="0.8"/><path d="M18 10L23 13L18 16Z" fill="#4AA060"/></svg>
<div class="t" style="left:225.4px;top:528.27px;font-size:10.3px;color:#000;">Demo</div>
<div class="a" style="left:205px;top:541px;width:1px;height:8px;background-image:repeating-linear-gradient(#A0A0A0 0 1px,transparent 1px 2px)"></div>
<div class="a" style="left:205px;top:548px;width:19px;height:1px;background-image:repeating-linear-gradient(90deg,#A0A0A0 0 1px,transparent 1px 2px)"></div>
<div class="a" style="left:246px;top:541px;width:65px;height:17px;background:#EAEAE4"></div>
<svg class="a" style="left:222px;top:541px;" width="16" height="15" viewBox="0 0 16 15"><circle cx="10" cy="7" r="4.5" fill="#7AB87A" stroke="#3A7A3A"/><path d="M5 8L1.5 14.5H8.5Z" fill="#F0D050" stroke="#9A7A20" stroke-width="0.8"/></svg>
<div class="t" style="left:239.5px;top:538.58px;font-size:7px;color:#7A2A7A;">S</div>
<div class="t" style="left:248.3px;top:544.17px;font-size:10.3px;color:#000;">main(String[])</div>
<div class="a" style="left:172px;top:672px;width:125px;height:15px;background:linear-gradient(#F3F3EE,#FBFBF8 50%,#F3F3EE)"></div>
<div class="a" style="left:175px;top:672px;width:14px;height:14px;background:linear-gradient(#D9E2F8,#C6D3F2);border-radius:2px;border-bottom:1px solid #B8C4DC"></div>
<svg class="a" style="left:177px;top:674px;" width="10" height="10" viewBox="0 0 10 10"><path d="M6.5 1.5L3 5L6.5 8.5" fill="none" stroke="#4D6185" stroke-width="2"/></svg>
<div class="a" style="left:191px;top:672px;width:82px;height:14px;background:linear-gradient(#CBD6F5,#BFCDF1 50%,#BAC9EE);border-radius:2px;border:1px solid #B0BEE0"></div>
<svg class="a" style="left:228px;top:675px;" width="8" height="8" viewBox="0 0 8 8"><path d="M0.5 0V8M2.5 0V8M4.5 0V8M6.5 0V8" stroke="#A4B0D0" stroke-width="0.8"/></svg>
<div class="a" style="left:296px;top:672px;width:14px;height:14px;background:linear-gradient(#D9E2F8,#C6D3F2);border-radius:2px;border-bottom:1px solid #B8C4DC"></div>
<svg class="a" style="left:298px;top:674px;" width="10" height="10" viewBox="0 0 10 10"><path d="M3.5 1.5L7 5L3.5 8.5" fill="none" stroke="#4D6185" stroke-width="2"/></svg>
<svg class="a" style="left:333px;top:586px;" width="14" height="14" viewBox="0 0 14 14"><path d="M2 2H11V13H2Z" fill="#F4F4F4" stroke="#A0A8B0"/><path d="M3.5 7L5.5 9.5L10 4" stroke="#6A9AC0" stroke-width="1.6" fill="none"/></svg>
<div class="t" style="left:350.3px;top:587.63px;font-size:11px;color:#7A7A7A;">Tasks</div>
<svg class="a" style="left:388px;top:586px;" width="15" height="14" viewBox="0 0 15 14"><path d="M2 13L9 4L13 1L11 6L4 14Z" fill="#E4DCC0" stroke="#C0B490"/></svg>
<div class="t" style="left:406px;top:587.63px;font-size:11px;color:#7A7A7A;">Search</div>
<svg class="a" style="left:450px;top:585px;" width="15" height="16" viewBox="0 0 15 16"><circle cx="5.5" cy="5.5" r="4.5" fill="#E8A0B0" stroke="#C07080"/><path d="M3 14H13V6" stroke="#909090" fill="none"/></svg>
<div class="t" style="left:467.5px;top:587.63px;font-size:11px;color:#7A7A7A;">Error Log</div>
<svg class="a" style="left:525px;top:586px;" width="13" height="13" viewBox="0 0 13 13"><rect x="1" y="1" width="11" height="9" fill="#D0E0F0" stroke="#2A4A7A" stroke-width="1.3"/><path d="M3 12H10" stroke="#2A4A7A" stroke-width="1.5"/></svg>
<div class="t" style="left:541.9px;top:587.63px;font-size:11px;color:#000;">Console</div>
<svg class="a" style="left:588px;top:588px;" width="11" height="10" viewBox="0 0 11 10"><path d="M1.8 1.8L9.2 8.2M9.2 1.8L1.8 8.2" stroke="#8A8A8A" stroke-width="3"/><path d="M1.8 1.8L9.2 8.2M9.2 1.8L1.8 8.2" stroke="#fff" stroke-width="1.2"/></svg>
<svg class="a" style="left:610px;top:586px;" width="14" height="14" viewBox="0 0 14 14"><rect x="1" y="3" width="11" height="7" fill="#F0F0F0" stroke="#A0A0A0"/><path d="M3 6.5H8" stroke="#B0B0B0"/><circle cx="10.5" cy="10" r="3" fill="#fff" stroke="#909090"/></svg>
<div class="t" style="left:627.2px;top:587.63px;font-size:11px;color:#7A7A7A;">Progress</div>
<svg class="a" style="left:929px;top:585px;" width="16" height="15" viewBox="0 0 16 15"><path d="M1 1H8L11 4V13H1Z" fill="#fff" stroke="#8A8A90"/><path d="M3 5H8M3 7H8M3 9H7" stroke="#A0A0A8"/><path d="M10 9L15 14M15 9L10 14" stroke="#303040" stroke-width="1.6"/></svg>
<svg class="a" style="left:950px;top:585px;" width="16" height="16" viewBox="0 0 16 16"><rect x="7" y="1" width="8" height="13" fill="#F0F0F0" stroke="#707070"/><path d="M9 4H13M9 7H13" stroke="#909090"/><path d="M1 15L5 6L9 15Z" fill="#F0D050" stroke="#7A5A10"/></svg>
<div class="a" style="left:973px;top:583px;width:1px;height:18px;background:#D0D0C8"></div>
<svg class="a" style="left:981px;top:586px;" width="14" height="13" viewBox="0 0 14 13"><rect x="1" y="4" width="10" height="8" fill="#D8E8F4" stroke="#4A6A8A"/><path d="M1 6H11" stroke="#4A6A8A" stroke-width="1.5"/><circle cx="11" cy="3" r="2.5" fill="#3A9A5A"/></svg>
<svg class="a" style="left:1003px;top:585px;" width="14" height="14" viewBox="0 0 14 14"><rect x="1" y="1" width="12" height="9" fill="#E8E8E8" stroke="#505050"/><rect x="3" y="3" width="8" height="5" fill="#B8C8D8"/><path d="M4 12H10" stroke="#505050" stroke-width="1.5"/></svg>
<svg class="a" style="left:1021px;top:590px;" width="6" height="4" viewBox="0 0 6 4"><path d="M0 0H6L3 3.5Z" fill="#B0B0B0"/></svg>
<svg class="a" style="left:1035px;top:585px;" width="16" height="15" viewBox="0 0 16 15"><rect x="1" y="4" width="10" height="10" fill="#F0F0E8" stroke="#606060"/><path d="M1 6H11" stroke="#606060"/><path d="M12 9V2M9.5 4.5L12 1.5L14.5 4.5" stroke="#C0A030" stroke-width="1.3" fill="none"/></svg>
<svg class="a" style="left:1056px;top:590px;" width="6" height="4" viewBox="0 0 6 4"><path d="M0 0H6L3 3.5Z" fill="#202020"/></svg>
<div class="a" style="left:1070px;top:589px;width:11px;height:4px;border:1px solid #707070;background:#fff;border-radius:1px"></div>
<div class="a" style="left:1093px;top:588px;width:10px;height:10px;border:1px solid #606060;border-top-width:2px;background:#fff"></div>
<div class="t" style="left:333px;top:608.32px;font-size:10.2px;color:#000;">Android</div>
<div class="a" style="left:333px;top:619px;width:779px;height:1px;background:#8E8E8E"></div>
<div class="a" style="left:1094px;top:620px;width:15px;height:51px;background:linear-gradient(90deg,#F6F6F2,#FCFCFA 50%,#F6F6F2)"></div>
<div class="a" style="left:1095px;top:623px;width:14px;height:13px;background:linear-gradient(#F2F2EE,#E4E4E0);border-radius:2px"></div>
<svg class="a" style="left:1097px;top:625px;" width="10" height="10" viewBox="0 0 10 10"><path d="M1.5 7L5 3.5L8.5 7" fill="none" stroke="#B8B8B8" stroke-width="1.6"/></svg>
<div class="a" style="left:1095px;top:657px;width:14px;height:13px;background:linear-gradient(#F2F2EE,#E4E4E0);border-radius:2px"></div>
<svg class="a" style="left:1097px;top:659px;" width="10" height="10" viewBox="0 0 10 10"><path d="M1.5 3.5L5 7L8.5 3.5" fill="none" stroke="#B8B8B8" stroke-width="1.6"/></svg>
<div class="a" style="left:333px;top:671px;width:761px;height:16px;background:linear-gradient(#F2F2EE,#FAFAF8 50%,#F2F2EE)"></div>
<div class="a" style="left:334px;top:673px;width:14px;height:13px;background:linear-gradient(#F2F2EE,#E4E4E0);border-radius:2px;border:1px solid #E0E0DA"></div>
<svg class="a" style="left:336px;top:675px;" width="10" height="10" viewBox="0 0 10 10"><path d="M6.5 1.5L3 5L6.5 8.5" fill="none" stroke="#B8B8B8" stroke-width="1.6"/></svg>
<div class="a" style="left:1079px;top:673px;width:13px;height:13px;background:linear-gradient(#F2F2EE,#E4E4E0);border-radius:2px;border:1px solid #E0E0DA"></div>
<svg class="a" style="left:1080px;top:675px;" width="10" height="10" viewBox="0 0 10 10"><path d="M3.5 1.5L7 5L3.5 8.5" fill="none" stroke="#B8B8B8" stroke-width="1.6"/></svg>
<div class="a" style="left:1094px;top:671px;width:15px;height:16px;background:#ECECE6"></div>
<div class="a" style="left:653px;top:698px;width:1px;height:22px;background:#A0A098"></div>
<div class="a" style="left:654px;top:698px;width:1px;height:22px;background:#fff"></div>
<div class="a" style="left:737px;top:698px;width:1px;height:22px;background:#A0A098"></div>
<div class="a" style="left:738px;top:698px;width:1px;height:22px;background:#fff"></div>
<div class="a" style="left:815px;top:698px;width:1px;height:22px;background:#A0A098"></div>
<div class="a" style="left:816px;top:698px;width:1px;height:22px;background:#fff"></div>
<div class="t" style="left:660px;top:704.77px;font-size:10.3px;color:#000;">Writable</div>
<div class="t" style="left:743.8px;top:704.77px;font-size:10.3px;color:#000;">Smart Insert</div>
<div class="t" style="left:821.7px;top:704.77px;font-size:10.3px;color:#000;">25 : 1</div>
<div class="a" style="left:1013px;top:615px;width:76px;height:60px;border-radius:50%;background:rgba(180,180,180,0.45);transform:rotate(20deg)"></div>
<div class="t" style="left:1032px;top:622.5px;font-size:40px;font-weight:bold;color:#FAFAFA;transform:scaleX(0.64);transform-origin:0 0;letter-spacing:0px">VTC</div>
<svg class="a" style="left:177px;top:50px;" width="17" height="15" viewBox="0 0 17 15"><path d="M1.5 3.5H12V13.5H1.5Z" fill="#fff" stroke="#7A7A7A"/><path d="M1.5 3.5H12V5.5H1.5Z" fill="#C8D0D8"/><path d="M12 0.5V6M9.5 3H14.5M10.2 1.2L13.8 4.8M13.8 1.2L10.2 4.8" stroke="#E8C020" stroke-width="1.2"/></svg>
<svg class="a" style="left:196.9px;top:55.5px;" width="5" height="3" viewBox="0 0 5 3"><path d="M0 0H5L2.5 3Z" fill="#000"/></svg>
<svg class="a" style="left:211px;top:50px;" width="14" height="15" viewBox="0 0 14 15"><path d="M1.5 1.5H12.5V13.5H1.5Z" fill="#F2F2F2" stroke="#C4C4C4"/><rect x="4" y="2" width="6" height="4" fill="#fff" stroke="#D0D0D0"/><rect x="4" y="9" width="6" height="4" fill="#E0E0E0"/></svg>
<svg class="a" style="left:232px;top:50px;" width="14" height="15" viewBox="0 0 14 15"><path d="M1.5 1.5H8V9H1.5Z" fill="#F0F0F0" stroke="#C8C8C8"/><path d="M5.5 5.5H12.5V13.5H5.5Z" fill="#F2F2F2" stroke="#C4C4C4"/></svg>
<svg class="a" style="left:253px;top:50px;" width="16" height="15" viewBox="0 0 16 15"><rect x="4" y="1.5" width="8" height="5" fill="#fff" stroke="#8A8A8A"/><path d="M1.5 6.5H14.5V12.5H1.5Z" fill="#E4E8EC" stroke="#6A7080"/><path d="M3 10.5H13" stroke="#8A9AB0"/></svg>
<svg class="a" style="left:284px;top:50px;" width="16" height="15" viewBox="0 0 16 15"><circle cx="8" cy="7.5" r="7" fill="#F0A030"/><path d="M8 3V12M5 6L8 4L11 6" stroke="#F8D090" stroke-width="0.8" fill="none"/></svg>
<svg class="a" style="left:303.0px;top:55.5px;" width="5" height="3" viewBox="0 0 5 3"><path d="M0 0H5L2.5 3Z" fill="#000"/></svg>
<svg class="a" style="left:326px;top:49px;" width="17" height="16" viewBox="0 0 17 16"><ellipse cx="8.5" cy="9" rx="4.5" ry="5.5" fill="#6AA04A" stroke="#3A6A2A"/><path d="M1 4L4 6M16 4L13 6M1 9H4M13 9H16M2 14L4.5 12M15 14L12.5 12M6 3L5 1M11 3L12 1" stroke="#3A5A2A" stroke-width="1.2"/><path d="M6.5 8L10.5 11" stroke="#D0F0A0" stroke-width="1.2"/></svg>
<svg class="a" style="left:346.5px;top:55.5px;" width="5" height="3" viewBox="0 0 5 3"><path d="M0 0H5L2.5 3Z" fill="#000"/></svg>
<svg class="a" style="left:361px;top:50px;" width="15" height="15" viewBox="0 0 15 15"><circle cx="7.5" cy="7.5" r="6.8" fill="#4AA048" stroke="#2A6A30"/><path d="M5.5 3.8L11 7.5L5.5 11.2Z" fill="#fff"/></svg>
<svg class="a" style="left:380.5px;top:55.5px;" width="5" height="3" viewBox="0 0 5 3"><path d="M0 0H5L2.5 3Z" fill="#000"/></svg>
<svg class="a" style="left:393px;top:49px;" width="17" height="17" viewBox="0 0 17 17"><circle cx="6.5" cy="6.5" r="5.8" fill="#4AA048" stroke="#2A6A30"/><path d="M4.8 3.5L9.5 6.5L4.8 9.5Z" fill="#fff"/><rect x="8" y="11" width="8" height="5" fill="#D03030" stroke="#902020"/></svg>
<svg class="a" style="left:414.5px;top:55.5px;" width="5" height="3" viewBox="0 0 5 3"><path d="M0 0H5L2.5 3Z" fill="#000"/></svg>
<div class="a" style="left:431px;top:49px;width:1px;height:17px;background:#9AA8C4"></div>
<div class="a" style="left:432px;top:49px;width:1px;height:17px;background:#F0F4FC"></div>
<svg class="a" style="left:438px;top:50px;" width="16" height="15" viewBox="0 0 16 15"><rect x="1.5" y="1.5" width="12" height="9" fill="#D8E0E8" stroke="#404858" stroke-width="1.2"/><path d="M4 13.5H11M7.5 10.5V13.5" stroke="#404858" stroke-width="1.3"/><path d="M7 9L12 3" stroke="#6AA04A" stroke-width="1.6"/></svg>
<svg class="a" style="left:459.2px;top:55.5px;" width="5" height="3" viewBox="0 0 5 3"><path d="M0 0H5L2.5 3Z" fill="#000"/></svg>
<svg class="a" style="left:481px;top:49px;" width="16" height="16" viewBox="0 0 16 16"><path d="M1 6H6L7 7H13V14H1Z" fill="#F2D080" stroke="#A88838"/><path d="M2.5 9H15L13 14H1Z" fill="#F8E0A0" stroke="#A88838"/><circle cx="10.5" cy="5" r="3.5" fill="#5A8A6A" stroke="#3A5A4A"/></svg>
<svg class="a" style="left:503px;top:50px;" width="16" height="14" viewBox="0 0 16 14"><path d="M1 3H6L7.5 4.5H13V12.5H1Z" fill="#F2D888" stroke="#A88838"/><path d="M2.5 7H15L13 12.5H1Z" fill="#F8E6A8" stroke="#A88838"/></svg>
<svg class="a" style="left:525px;top:49px;" width="17" height="16" viewBox="0 0 17 16"><path d="M3 13L12 3L15 5L6 15Z" fill="#F0E6C0" stroke="#8A7A40"/><path d="M3 13L1.5 15.5L6 15Z" fill="#fff" stroke="#8A7A40"/><path d="M12 3L14 1L16.5 3.5L15 5Z" fill="#C8A040"/></svg>
<svg class="a" style="left:545.5px;top:55.5px;" width="5" height="3" viewBox="0 0 5 3"><path d="M0 0H5L2.5 3Z" fill="#000"/></svg>
<div class="a" style="left:566px;top:47px;width:21px;height:19px;border:1px solid #9AA4B8;border-radius:3px;background:linear-gradient(#FAFBFD,#EEF1F8)"></div>
<svg class="a" style="left:569px;top:50px;" width="15" height="13" viewBox="0 0 15 13"><path d="M2 6L6 2L8 4L4 8Z M7 9L11 5L13 7L9 11Z" fill="#E0E0E0" stroke="#A0A0A0"/></svg>
<svg class="a" style="left:589px;top:50px;" width="18" height="14" viewBox="0 0 18 14"><rect x="1" y="1" width="3" height="3" fill="#404040"/><rect x="5" y="1" width="12" height="3" fill="#40D040"/><rect x="1" y="5.5" width="3" height="3" fill="#404040"/><rect x="5" y="5.5" width="12" height="3" fill="#30A030"/><rect x="1" y="10" width="3" height="3" fill="#404040"/><rect x="5" y="10" width="12" height="3" fill="#40C040"/></svg>
<svg class="a" style="left:623px;top:49px;" width="15" height="16" viewBox="0 0 15 16"><path d="M2 5L2 15L5 12L7 15.5L8.5 14.5L6.5 11.5H10Z" fill="#202020"/><circle cx="10" cy="5" r="4" fill="#fff" stroke="#3A7A5A" stroke-width="1.3"/><path d="M11.5 3.5Q10 2.5 9 4Q8.5 5.5 9.5 6.5Q10.7 7 11.5 6" stroke="#3A7A5A" fill="none"/></svg>
<div class="a" style="left:641px;top:47px;width:21px;height:19px;border:1px solid #9AA4B8;border-radius:3px;background:linear-gradient(#FAFBFD,#EEF1F8)"></div>
<svg class="a" style="left:644px;top:49px;" width="16" height="15" viewBox="0 0 16 15"><path d="M2 13L10 4L14 8L6 14Z" fill="#F0E890" stroke="#B0A040"/><path d="M10 4L13 1L15.5 3.5L14 8Z" fill="#404040"/></svg>
<svg class="a" style="left:667px;top:50px;" width="14" height="14" viewBox="0 0 14 14"><path d="M1 6L5 3L8 7L12 4" stroke="#707070" stroke-width="2" fill="none"/><circle cx="5" cy="10" r="2.5" fill="#808080"/><circle cx="10" cy="9" r="2" fill="#A0A0A0"/></svg>
<svg class="a" style="left:686px;top:49px;" width="15" height="16" viewBox="0 0 15 16"><rect x="1.5" y="1.5" width="12" height="13" fill="#F0F0F4" stroke="#8A8A90"/><path d="M4 4.5H11M4 7H11M4 9.5H11M4 12H9" stroke="#505060"/></svg>
<svg class="a" style="left:708px;top:49px;" width="16" height="16" viewBox="0 0 16 16"><rect x="1" y="1" width="14" height="14" fill="#F4F4F4" stroke="#9A9A9A"/><text x="3.5" y="12.5" font-size="11" font-family="Liberation Sans" fill="#303030">&#182;</text></svg>
<svg class="a" style="left:741px;top:49px;" width="14" height="15" viewBox="0 0 14 15"><rect x="1" y="1" width="12" height="13" fill="#F0EEE8" stroke="#A8A8A0"/><text x="5" y="11" font-size="10" font-weight="bold" font-style="italic" font-family="Liberation Sans" fill="#202020">;</text></svg>
<svg class="a" style="left:772px;top:49px;" width="15" height="17" viewBox="0 0 15 17"><path d="M4 1.5H9V7H12L6.5 12.5L1 7H4Z" fill="#F6DA6A" stroke="#9A7A20"/><rect x="10" y="5" width="4" height="11" fill="#E4E8F0" stroke="#9AA0B0" stroke-width="0.8"/><path d="M3 15H8" stroke="#404040"/></svg>
<svg class="a" style="left:793.5px;top:55.5px;" width="5" height="3" viewBox="0 0 5 3"><path d="M0 0H5L2.5 3Z" fill="#000"/></svg>
<svg class="a" style="left:806px;top:48px;" width="15" height="18" viewBox="0 0 15 18"><path d="M6.5 3L12 8.5H9V15H4V8.5H1Z" fill="#F6DA6A" stroke="#9A7A20"/><path d="M5 1H8" stroke="#404040"/><rect x="12" y="2" width="2" height="13" fill="#E0E4EC"/></svg>
<svg class="a" style="left:827.5px;top:55.5px;" width="5" height="3" viewBox="0 0 5 3"><path d="M0 0H5L2.5 3Z" fill="#000"/></svg>
<svg class="a" style="left:839px;top:49px;" width="17" height="15" viewBox="0 0 17 15"><path d="M1.5 7.5L7 2.5V5.5H15V10H7V13Z" fill="#F6DA6A" stroke="#9A7A20"/><path d="M2 1L4 3M4 1L2 3" stroke="#505050"/></svg>
<svg class="a" style="left:862px;top:49px;" width="15" height="15" viewBox="0 0 15 15"><path d="M1.5 7.5L7 2.5V5.5H14V10H7V13Z" fill="#F6DA6A" stroke="#9A7A20"/></svg>
<svg class="a" style="left:883.1px;top:55.5px;" width="5" height="3" viewBox="0 0 5 3"><path d="M0 0H5L2.5 3Z" fill="#000"/></svg>
<svg class="a" style="left:896px;top:50px;" width="14" height="13" viewBox="0 0 14 13"><path d="M13 6.5L8 2V5H1V8.5H8V11Z" fill="#F4F4F4" stroke="#D0D0D0"/></svg>
<div class="a" style="left:917px;top:49px;width:1px;height:17px;background:#B8C2D8"></div>
<svg class="a" style="left:936px;top:49px;" width="15" height="16" viewBox="0 0 15 16"><path d="M2 8H12V14H2Z" fill="#F2F2F2" stroke="#B0B0B0"/><path d="M8 7L12 2" stroke="#606060" stroke-width="1.5"/><circle cx="12" cy="2.5" r="1.5" fill="#505050"/></svg>
<div class="a" style="left:665px;top:73px;width:134px;height:18px;background:#fff;border:1px solid #7A8499;border-right-color:#C8CCD4;border-bottom-color:#D0D4DC"></div>
<div class="t" style="left:671px;top:77.76px;font-size:9.7px;color:#808080;">Quick Access</div>
<svg class="a" style="left:815px;top:75px;" width="16" height="15" viewBox="0 0 16 15"><rect x="1.5" y="3.5" width="11" height="10" fill="#F4F4F0" stroke="#606060"/><path d="M1.5 7H12.5M6 7V13.5" stroke="#606060"/><path d="M11 1.5L14 1.5L14 5M10 6L14 1.5" stroke="#B89838" stroke-width="1.2" fill="none"/></svg>
<div class="a" style="left:836px;top:72px;width:1px;height:20px;background:#C8C8C0"></div>
<svg class="a" style="left:842px;top:74px;" width="17" height="17" viewBox="0 0 17 17"><rect x="1" y="7" width="5" height="5" fill="#F6E8A0" stroke="#8A7A40"/><rect x="9" y="11" width="5" height="5" fill="#F6E8A0" stroke="#8A7A40"/><path d="M3.5 7V4M3.5 12V14H9" stroke="#606060"/><ellipse cx="11.5" cy="5" rx="4" ry="4" fill="#8A5A3A" stroke="#5A3A20"/><path d="M9.5 3.5L13.5 6.5" stroke="#C8A080"/></svg>
<div class="t" style="left:862px;top:78.57px;font-size:10.3px;color:#000;">Java EE</div>
<svg class="a" style="left:908px;top:73px;" width="17" height="18" viewBox="0 0 17 18"><path d="M1.5 1.5H10L13 4.5V16.5H1.5Z" fill="#F4E6A0" stroke="#A89048"/><rect x="4" y="10" width="12" height="6.5" fill="#fff" stroke="#8A8A8A"/><text x="5.5" y="15.3" font-size="5" font-weight="bold" font-family="Liberation Sans" fill="#505050">GIT</text></svg>
<div class="t" style="left:926.4px;top:78.57px;font-size:10.3px;color:#000;">Git Repository Exploring</div>
<div class="a" style="left:1042px;top:73px;width:72px;height:22px;border:1px solid #8E8E8A;border-radius:3px;background:linear-gradient(#FCFCFB,#F2F2EE)"></div>
<svg class="a" style="left:1046px;top:75px;" width="17" height="17" viewBox="0 0 17 17"><rect x="1" y="1" width="8" height="11" fill="#F4F4F0" stroke="#A0A098"/><path d="M5 7H9L10 6H15V16H5Z" fill="#F2E6A8" stroke="#A89858"/></svg>
<div class="t" style="left:1064.3px;top:78.97px;font-size:10.3px;color:#000;">Resource</div></body></html>
